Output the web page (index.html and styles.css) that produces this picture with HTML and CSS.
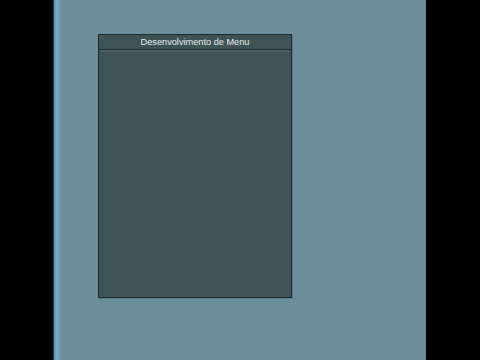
FILE: index.html
```html
<!DOCTYPE html>
<html lang="pt">
<head>
    <meta charset="UTF-8">
    <title>Desenvolvimento de Menu</title>
    <link rel="stylesheet" href="styles.css">
</head>
<body>
    <div class="Screen">
        <div class="sideBlack"></div>
        <div class="edgeStripe"></div>
        <div class="stage">
            <div class="menuPanel">
                <div class="menuTitle">Desenvolvimento de Menu</div>
                <div class="menuBody"></div>
            </div>
        </div>
        <div class="sideBlack right"></div>
    </div>
</body>
</html>
```

FILE: styles.css
```css
*{margin:0;padding:0;box-sizing:border-box;}
html,body{
    width:480px;
    height:360px;
    overflow:hidden;
    background:#000;
    font-family:"Liberation Sans", Arial, sans-serif;
}

.Screen{
    display:flex;
    width:480px; height:360px;
}

.sideBlack{
    width:53px;
    background:#020203;
}
.sideBlack.right{
    width:54px;
    background:#000;
}

.edgeStripe{
    width:9px;
    background:linear-gradient(to right, #1d3a66 0, #1d3a66 1px, #4f8cbc 1px, #79b0d2 4px, #7aa2b4 5px, #6d909c 9px);
}

.stage{
    flex:1;
    background:#6b8e9a;
    padding:34px 0 0 36px;
}

.menuPanel{
    width:194px; height:264px;
    border:1px solid #1c2c30;
    background:#3e5353;
    display:flex;
    flex-direction:column;
    box-shadow:1px 1px 0 #5d7b84;
}

.menuTitle{
    height:15px;
    line-height:14px;
    text-align:center;
    font-size:9.2px;
    color:#e8eeee;
    border-bottom:1px solid #1f2f31;
    box-shadow:0 3px 0 -1px #4b6060;
}

.menuBody{
    flex:1;
}
```
